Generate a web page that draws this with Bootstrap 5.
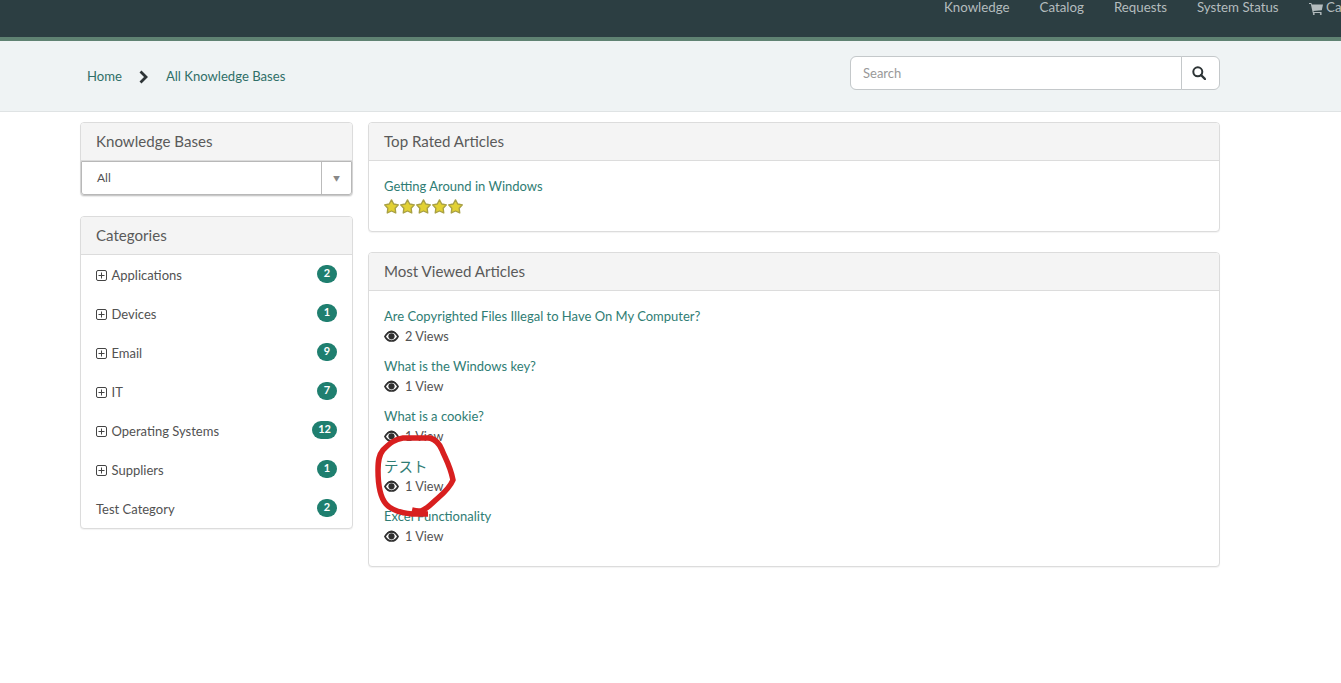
<!DOCTYPE html>
<html lang="en">
<head>
<meta charset="utf-8">
<title>Knowledge</title>
<link href="https://cdn.jsdelivr.net/npm/bootstrap@5.3.0/dist/css/bootstrap.min.css" rel="stylesheet">
<style>
html,body{overflow:hidden;height:683px}
body{font-family:Lato,"Noto Sans CJK JP",sans-serif;font-size:13px;color:#525252;background:#fff;position:relative}
a{color:#2f7d74;text-decoration:none}
.topbar{height:41px;background:#2c3e42;border-bottom:4px solid #5f8272;padding-left:944px;overflow:hidden;white-space:nowrap;gap:30px;line-height:14px;font-size:13.3px}
.topbar a{color:#b4bcbe;flex:none}
.crumbband{height:71px;background:#eff3f4;border-bottom:1px solid #dfe3e4;margin-bottom:10px}
.wrap{width:1140px;margin-left:80px}
.crumbs{padding:2px 0 0 7px;gap:17px;font-size:13.1px}
.crumbs a{color:#2f6f68}
.searchbox{width:370px;height:34px;margin-top:-6px}
.searchbox input{height:34px;font-size:13px;border-color:#c4c8ca;padding-left:12px}
.searchbox input::placeholder{color:#999}
.searchbox .btn{width:39px;background:#fff;border-color:#c4c8ca;padding:0 3px 0 0}
.sidecol{width:273px;flex:none}
.maincol{flex:1}
.mainrow{gap:15px}
.pane{border:1px solid #dcdcdc;border-radius:4px;box-shadow:0 1px 1px rgba(0,0,0,.05);margin-bottom:20px;background:#fff}
.panehead{height:38px;background:#f4f4f4;border-bottom:1px solid #dcdcdc;font-size:15.100px;color:#5a5a5a;padding:0 15px;display:flex;align-items:center;border-radius:3px 3px 0 0}
.kbselect{height:34px;border:1px solid #b8b8b8;border-radius:0 0 3px 3px;box-shadow:0 1px 2px rgba(0,0,0,.12);font-size:12px;padding-left:15px}
.kbselect .caretcell{width:30px;height:100%;border-left:1px solid #bbb;color:#888;font-size:7px}
.catrow{height:39px;padding:3px 15px 0;display:flex;align-items:center;justify-content:space-between}
.catname{display:flex;align-items:center;gap:5px}
.catname svg{margin-top:-1px;margin-left:-.5px}
.catpill{background:#1f7f6f;color:#fff;font-size:11px;font-weight:700;min-width:20px;height:18px;border-radius:9px;padding:0 6px;display:flex;align-items:center;justify-content:center;margin-top:-5px}
.panebody{padding:16px 15px 15px}
.maincol .pane:last-child .panebody{padding-bottom:9px}
.artitem{height:50px}
.ratedrow{height:39px}
.artitem a,.artitem .viewline{display:flex;height:20px;align-items:center}
.artitem a.jpname{font-size:14.500px}
.viewline{gap:6px;font-size:12.700px}
.viewline svg{margin-top:-3px}
.stars{display:flex;gap:1px;height:20px;align-items:center}
.stars svg{margin-top:-1px}
.scribble{position:absolute;left:0;top:0;pointer-events:none}
.defsonly{position:absolute;width:0;height:0}
</style>
</head>
<body>
<svg class="defsonly" aria-hidden="true">
  <symbol id="plusbox" viewBox="0 0 11 11"><rect x=".5" y=".5" width="10" height="10" rx="1.500" fill="none" stroke="#444"/><path d="M2.500 5.500h6M5.500 2.500v6" stroke="#444"/></symbol>
  <symbol id="eyeicon" viewBox="0 0 15 12"><path fill="none" stroke="#2f2f2f" stroke-width="1.700" d="M1 6.500C2.400 3.700 4.600 1.800 7.500 1.800S12.600 3.700 14 6.500C12.600 9.300 10.400 11 7.500 11S2.400 9.300 1 6.500z"/><path fill="#2f2f2f" d="M3 3C4.300 1.200 5.800.4 7.500.4S10.700 1.200 12 3L7.500 2.600z"/><circle cx="7.500" cy="6.300" r="3.100" fill="#2f2f2f"/></symbol>
  <symbol id="staricon" viewBox="0 0 24 24"><path fill="#e2d133" stroke="#a8a044" stroke-width="2.200" stroke-linejoin="round" d="M12 1.500 15.640 7.980 22.940 9.450 17.900 14.920 18.760 22.300 12 19.200 5.240 22.300 6.100 14.920 1.060 9.450 8.360 7.980z"/></symbol>
</svg>
<nav class="topbar d-flex align-items-start">
  <a href="#">Knowledge</a><a href="#">Catalog</a><a href="#">Requests</a><a href="#">System Status</a>
  <a href="#"><svg width="14" height="12" viewBox="0 0 14 12"><path fill="#b4bcbe" d="M0 0h2.400l.4 1.600H14l-1.200 5.600-8.400.8.300 1H12.500v1H3.800L1.800 1H0zM4.800 10a1 1 0 1 1 0 2 1 1 0 0 1 0-2zm7 0a1 1 0 1 1 0 2 1 1 0 0 1 0-2z"/></svg> Cart</a>
</nav>
<div class="crumbband">
  <div class="wrap d-flex justify-content-between align-items-center h-100">
    <div class="crumbs d-flex align-items-center">
      <a href="#">Home</a>
      <svg width="10" height="14" viewBox="0 0 10 14"><path fill="none" stroke="#2d3436" stroke-width="2.800" d="M1.500 1.500 7 7l-5.500 5.500"/></svg>
      <a href="#">All Knowledge Bases</a>
    </div>
    <div class="searchbox input-group">
      <input type="text" class="form-control" placeholder="Search">
      <button class="btn d-flex align-items-center justify-content-center" type="button" aria-label="Search"><svg width="14" height="14" viewBox="0 0 14 14"><circle cx="5.800" cy="5.800" r="4.500" fill="none" stroke="#2d3436" stroke-width="2"/><path d="m9 9 4 4" stroke="#2d3436" stroke-width="2.400" stroke-linecap="round"/></svg></button>
    </div>
  </div>
</div>
<div class="wrap d-flex mainrow">
  <div class="sidecol">
    <div class="pane">
      <div class="panehead">Knowledge Bases</div>
      <div class="kbselect d-flex justify-content-between align-items-center"><span>All</span><span class="caretcell d-flex align-items-center justify-content-center">▼</span></div>
    </div>
    <div class="pane">
      <div class="panehead">Categories</div>
      <div class="catrow"><span class="catname"><svg width="11" height="11"><use href="#plusbox"/></svg>Applications</span><span class="catpill">2</span></div>
      <div class="catrow"><span class="catname"><svg width="11" height="11"><use href="#plusbox"/></svg>Devices</span><span class="catpill">1</span></div>
      <div class="catrow"><span class="catname"><svg width="11" height="11"><use href="#plusbox"/></svg>Email</span><span class="catpill">9</span></div>
      <div class="catrow"><span class="catname"><svg width="11" height="11"><use href="#plusbox"/></svg>IT</span><span class="catpill">7</span></div>
      <div class="catrow"><span class="catname"><svg width="11" height="11"><use href="#plusbox"/></svg>Operating Systems</span><span class="catpill">12</span></div>
      <div class="catrow"><span class="catname"><svg width="11" height="11"><use href="#plusbox"/></svg>Suppliers</span><span class="catpill">1</span></div>
      <div class="catrow"><span class="catname">Test Category</span><span class="catpill">2</span></div>
    </div>
  </div>
  <div class="maincol">
    <div class="pane">
      <div class="panehead">Top Rated Articles</div>
      <div class="panebody">
        <div class="artitem ratedrow">
          <a href="#">Getting Around in Windows</a>
          <div class="stars">
            <svg width="15" height="15"><use href="#staricon"/></svg>
            <svg width="15" height="15"><use href="#staricon"/></svg>
            <svg width="15" height="15"><use href="#staricon"/></svg>
            <svg width="15" height="15"><use href="#staricon"/></svg>
            <svg width="15" height="15"><use href="#staricon"/></svg>
          </div>
        </div>
      </div>
    </div>
    <div class="pane">
      <div class="panehead">Most Viewed Articles</div>
      <div class="panebody">
        <div class="artitem"><a href="#">Are Copyrighted Files Illegal to Have On My Computer?</a><div class="viewline"><svg width="15" height="12"><use href="#eyeicon"/></svg><span>2 Views</span></div></div>
        <div class="artitem"><a href="#">What is the Windows key?</a><div class="viewline"><svg width="15" height="12"><use href="#eyeicon"/></svg><span>1 View</span></div></div>
        <div class="artitem"><a href="#">What is a cookie?</a><div class="viewline"><svg width="15" height="12"><use href="#eyeicon"/></svg><span>1 View</span></div></div>
        <div class="artitem"><a href="#" class="jpname">テスト</a><div class="viewline"><svg width="15" height="12"><use href="#eyeicon"/></svg><span>1 View</span></div></div>
        <div class="artitem"><a href="#">Excel Functionality</a><div class="viewline"><svg width="15" height="12"><use href="#eyeicon"/></svg><span>1 View</span></div></div>
      </div>
    </div>
  </div>
</div>
<svg class="scribble" width="1341" height="683" viewBox="0 0 1341 683"><path fill="none" stroke="#d81f1f" stroke-width="5.500" stroke-linecap="butt" stroke-linejoin="round" d="M428 514 412 514C402 513 392 511 386 504 380 497 378 485 378 470 378 460 379 455 383 450 390 443 395 439 403 438L430 438C437 440 440 445 442 450 445 458 450 465 453 480 450 487 445 492 438 498 432 503 428 508 423 510 420 512 416 511 412 510"/></svg>
<script src="https://cdn.jsdelivr.net/npm/bootstrap@5.3.0/dist/js/bootstrap.bundle.min.js"></script>
</body>
</html>
